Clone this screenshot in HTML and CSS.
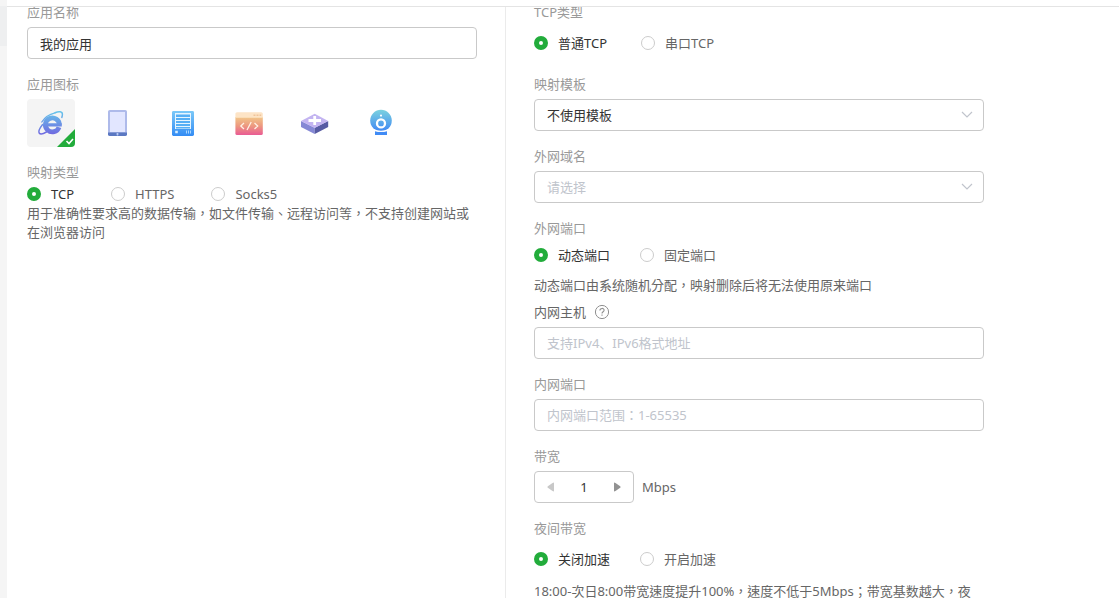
FILE: index.html
```html
<!DOCTYPE html>
<html lang="zh-CN">
<head>
<meta charset="utf-8">
<meta name="viewport" content="width=device-width, initial-scale=1">
<title>我的应用</title>
<link rel="stylesheet" href="styles.css">
</head>
<body>
<div class="shell">
  <aside class="rail"><div class="rail-active"></div></aside>
  <main class="main">
    <header class="topbar"></header>
    <form class="columns">
      <section class="column column-left">
        <div class="field">
          <label class="label" for="app-name">应用名称</label>
          <input class="control" id="app-name" type="text" value="我的应用">
        </div>
        <div class="field">
          <span class="label" id="icon-label">应用图标</span>
          <div class="icons" role="group" aria-labelledby="icon-label">
            <button class="tile tile-selected" type="button" aria-label="浏览器" aria-pressed="true">
              <svg width="32" height="32" viewBox="0 0 32 32" fill="none">
                <defs><linearGradient id="g-ie" x1="0" y1="5" x2="0" y2="28" gradientUnits="userSpaceOnUse"><stop stop-color="#66c3ea"/><stop offset="1" stop-color="#7167e0"/></linearGradient></defs>
                <path d="M24 20.2A7 7 0 1 1 24.4 17.8" stroke="url(#g-ie)" stroke-width="4.8"/>
                <path d="M10.5 16.2H26.8V19.4H10.5Z" fill="url(#g-ie)"/>
                <path d="M20 5.8C24 4 27.4 4.6 27.4 7.2C27.4 8.4 27.2 9.4 26.8 10.4M7.6 17.5C4.4 21.5 3.2 25 4.4 26.4C5.6 27.6 8.4 26.8 11.4 25" stroke="url(#g-ie)" stroke-width="1.5" stroke-linecap="round"/>
                <path d="M6.8 15C9.4 10.6 14.5 7.2 20 5.8" stroke="url(#g-ie)" stroke-width="1.3" stroke-linecap="round"/>
              </svg>
              <svg class="tick" width="18" height="18" viewBox="0 0 18 18" fill="none"><path d="M18 0V18H0Z" fill="#22ac3b"/><path d="M9.5 12L12 14.5L16 10" stroke="#fff" stroke-width="1.6"/></svg>
            </button>
            <button class="tile" type="button" aria-label="手机">
              <svg width="32" height="32" viewBox="0 0 32 32">
                <rect x="7" y="3" width="19" height="26" rx="1.8" fill="#aebaea"/>
                <rect x="9" y="5" width="15" height="20" fill="#e2e6ff"/>
                <path d="M7 25.5H26V27.2Q26 29 24.2 29H8.8Q7 29 7 27.2Z" fill="#5b78c2"/>
                <rect x="15.6" y="26" width="1.8" height="2.4" rx=".6" fill="#b9c9f4"/>
              </svg>
            </button>
            <button class="tile" type="button" aria-label="服务器">
              <svg width="32" height="32" viewBox="0 0 32 32">
                <defs><linearGradient id="g-server" x1="0" y1="0" x2="0" y2="1"><stop stop-color="#7cc9f8"/><stop offset="1" stop-color="#338cf4"/></linearGradient></defs>
                <rect x="5" y="4" width="22" height="25" rx="1.4" fill="url(#g-server)"/>
                <path d="M8 6H24V22H8Z" fill="#e6f5ff"/>
                <path d="M9 7.5H23V10H9ZM9 11H23V13H9ZM9 14H23V16H9ZM9 17H23V19H9ZM9 20H23V21.5H9Z" fill="#56aff5"/>
                <path d="M8.2 23.8H10.8V26.2H8.2Z" fill="#d8eeff"/>
                <path d="M19 23.5H20V26.5H19ZM21 23.5H22V26.5H21ZM23 23.5H24V26.5H23Z" fill="#a9d6ff"/>
              </svg>
            </button>
            <button class="tile" type="button" aria-label="代码">
              <svg width="32" height="32" viewBox="0 0 32 32">
                <defs><linearGradient id="g-code" x1="0" y1="0" x2="0" y2="1"><stop stop-color="#f1c78a"/><stop offset=".5" stop-color="#ed987f"/><stop offset="1" stop-color="#e95b94"/></linearGradient></defs>
                <path d="M2.4 10H29.8V26.4Q29.8 28 28.2 28H4Q2.4 28 2.4 26.4Z" fill="url(#g-code)"/>
                <path d="M2.4 10.8V6.8Q2.4 5.2 4 5.2H28.2Q29.8 5.2 29.8 6.8V10.8Z" fill="#fde4c6"/>
                <path d="M20.5 7.4H22.5V9H20.5ZM23.5 7.4H25.5V9H23.5ZM26.5 7.4H28.2V9H26.5Z" fill="#f0c49a"/>
                <path d="M11 16L7.8 19L11 22M21.5 16L24.7 19L21.5 22M18.2 15L14 23" fill="none" stroke="#fff0e4" stroke-width="1.3"/>
              </svg>
            </button>
            <button class="tile" type="button" aria-label="组件">
              <svg width="32" height="32" viewBox="0 0 32 32">
                <path d="M2 14L15.7 20.8V27L2 20Z" fill="#8588d5"/>
                <path d="M29.2 14L15.7 20.8V27L29.2 20Z" fill="#575ba3"/>
                <path d="M15.7 6.7L29.2 14L15.7 21L2 14Z" fill="#c3b4f1"/>
                <path d="M15.7 9V18M9.5 13.5H22" stroke="#fff" stroke-width="2.8"/>
              </svg>
            </button>
            <button class="tile" type="button" aria-label="摄像头">
              <svg width="32" height="32" viewBox="0 0 32 32">
                <defs><linearGradient id="g-cam" x1="0" y1="0" x2="0" y2="1"><stop stop-color="#7bd2df"/><stop offset="1" stop-color="#4189f4"/></linearGradient></defs>
                <circle cx="16" cy="13.6" r="10.8" fill="url(#g-cam)"/>
                <circle cx="16" cy="8.6" r="1.1" fill="#fff"/>
                <circle cx="16" cy="16.4" r="4" fill="none" stroke="#fff" stroke-width="2.3"/>
                <path d="M8 22.2Q16 26.4 24 22.2" fill="none" stroke="#fff" stroke-width="1.2"/>
                <path d="M10 24.2Q16 26 22 24.2V28H10Z" fill="#408bf5"/>
              </svg>
            </button>
          </div>
        </div>
        <div class="field">
          <span class="label" id="map-label">映射类型</span>
          <div class="radios radios-compact" role="radiogroup" aria-labelledby="map-label">
            <label class="radio"><input type="radio" name="map" checked><span>TCP</span></label>
            <label class="radio"><input type="radio" name="map"><span>HTTPS</span></label>
            <label class="radio"><input type="radio" name="map"><span>Socks5</span></label>
          </div>
          <p class="note centered-marks" lang="zh-Hant">用于准确性要求高的数据传输，如文件传输、远程访问等，不支持创建网站或在浏览器访问</p>
        </div>
      </section>

      <section class="column column-right">
        <div class="field">
          <span class="label" id="tcp-label">TCP类型</span>
          <div class="radios radios-wide" role="radiogroup" aria-labelledby="tcp-label">
            <label class="radio"><input type="radio" name="tcp" checked><span>普通TCP</span></label>
            <label class="radio"><input type="radio" name="tcp"><span>串口TCP</span></label>
          </div>
        </div>
        <div class="field">
          <label class="label" for="template">映射模板</label>
          <div class="select">
            <select class="control" id="template"><option>不使用模板</option></select>
            <svg class="chevron" width="12" height="8" viewBox="0 0 12 8" fill="none"><path d="M1 1L6 6L11 1" stroke="#c0c4cc" stroke-width="1.2"/></svg>
          </div>
        </div>
        <div class="field">
          <label class="label" for="domain">外网域名</label>
          <div class="select">
            <select class="control control-empty" id="domain"><option>请选择</option></select>
            <svg class="chevron" width="12" height="8" viewBox="0 0 12 8" fill="none"><path d="M1 1L6 6L11 1" stroke="#c0c4cc" stroke-width="1.2"/></svg>
          </div>
        </div>
        <div class="field field-tight">
          <span class="label" id="port-label">外网端口</span>
          <div class="radios radios-medium" role="radiogroup" aria-labelledby="port-label">
            <label class="radio"><input type="radio" name="port" checked><span>动态端口</span></label>
            <label class="radio"><input type="radio" name="port"><span>固定端口</span></label>
          </div>
          <p class="note note-spaced centered-marks" lang="zh-Hant">动态端口由系统随机分配，映射删除后将无法使用原来端口</p>
        </div>
        <div class="field">
          <div class="label label-dark">
            <label for="host">内网主机</label>
            <svg width="16" height="16" viewBox="0 0 16 16" fill="none" stroke="#909090"><circle cx="8" cy="8" r="6.6"/><path d="M5.9 6.6C5.9 3.7 10.2 3.8 10.1 6.3C10 7.8 8 7.8 8 9.5M8 10.6V11.8" stroke-width="1.1"/></svg>
          </div>
          <input class="control" id="host" type="text" placeholder="支持IPv4、IPv6格式地址">
        </div>
        <div class="field">
          <label class="label" for="lan-port">内网端口</label>
          <input class="control centered-marks" id="lan-port" lang="zh-Hant" type="text" placeholder="内网端口范围：1-65535">
        </div>
        <div class="field">
          <label class="label" for="bandwidth">带宽</label>
          <div class="bandwidth">
            <div class="stepper">
              <button type="button" aria-label="减少" disabled><svg width="8" height="10" viewBox="0 0 8 10"><path d="M7 .5V9.5L5.5 9L.8 5.8Q0 5 .8 4.2L5.5 1Z" fill="#c8c8c8"/></svg></button>
              <input id="bandwidth" type="text" value="1">
              <button type="button" aria-label="增加"><svg width="8" height="10" viewBox="0 0 8 10"><path d="M1 .5V9.5L2.5 9L7.2 5.8Q8 5 7.2 4.2L2.5 1Z" fill="#929292"/></svg></button>
            </div>
            <span>Mbps</span>
          </div>
        </div>
        <div class="field">
          <span class="label" id="night-label">夜间带宽</span>
          <div class="radios" role="radiogroup" aria-labelledby="night-label">
            <label class="radio"><input type="radio" name="night" checked><span>关闭加速</span></label>
            <label class="radio"><input type="radio" name="night"><span>开启加速</span></label>
          </div>
          <p class="note note-last centered-marks" lang="zh-Hant">18:00-次日8:00带宽速度提升100%，速度不低于5Mbps；带宽基数越大，夜</p>
        </div>
      </section>
    </form>
  </main>
</div>
</body>
</html>
```
FILE: styles.css
```css
* { box-sizing: border-box; }
body {
  margin: 0;
  background: #fff;
  color: #666;
  font: 13px/20px "Noto Sans", "Noto Sans CJK SC", sans-serif;
}
button, input, select { font: inherit; color: inherit; margin: 0; }
.shell { display: flex; height: 100vh; overflow: hidden; }
.rail { flex: none; width: 7px; padding-top: 6px; background: #f5f5f5; }
.rail-active { height: 40px; background: #eeeff0; }
.main { flex: 1; min-width: 0; display: flex; flex-direction: column; }
.topbar { flex: none; height: 7px; border-bottom: 1px solid #e4e4e4; }
.columns {
  flex: 1;
  min-height: 0;
  overflow: hidden;
  display: grid;
  grid-template-columns: minmax(0, 499px) minmax(0, 1fr);
}
.column { margin-top: -5px; }
.column-left { padding: 0 28px 0 20px; border-right: 1px solid #ebebeb; }
.column-right { padding: 0 28px; }
.field { max-width: 450px; margin-bottom: 15px; }
.field-tight { margin-bottom: 7px; }
.label { display: block; margin-bottom: 5px; color: #999; }
.label-dark { display: flex; align-items: center; gap: 8px; color: #666; }

/* Traditional face sets commas and colons in the middle of their cell */
.centered-marks { font-family: "Noto Sans", "Noto Sans CJK TC", sans-serif; }

.control {
  display: block;
  width: 100%;
  height: 32px;
  padding: 0 12px;
  border: 1px solid #c9c9c9;
  border-radius: 4px;
  background: #fff;
  color: #333;
  outline: none;
  appearance: none;
}
.control::placeholder { color: #c0c4cc; opacity: 1; }
.control-empty { color: #c0c4cc; }
.select { position: relative; }
.chevron { position: absolute; right: 11px; top: 12px; pointer-events: none; }

.icons { display: flex; flex-wrap: wrap; gap: 18px; }
.tile {
  position: relative;
  display: grid;
  place-items: center;
  width: 48px;
  height: 48px;
  padding: 0;
  border: 0;
  border-radius: 4px;
  background: none;
  overflow: hidden;
}
.tile-selected { background: #f4f4f4; }
.tick { position: absolute; right: 0; bottom: 0; }

.radios { display: flex; align-items: center; gap: 30px; height: 32px; }
.radios-wide { gap: 34px; }
.radios-medium { height: 24px; }
.radios-compact { gap: 37px; height: 20px; margin-top: -3px; }
.radio { display: flex; align-items: center; gap: 10px; }
.radio input {
  appearance: none;
  width: 14px;
  height: 14px;
  border: 1px solid #ccc;
  border-radius: 50%;
  background: #fff;
}
.radio input:checked { border: 5px solid #22ac3b; }
.radio input:checked + span { color: #333; }
.note { margin: 0; line-height: 19px; }
.note-spaced { margin-top: 8px; line-height: 20px; }
.note-last { margin-top: 6px; line-height: 20px; }

.bandwidth { display: flex; align-items: center; gap: 8px; }
.stepper {
  display: flex;
  width: 100px;
  height: 32px;
  border: 1px solid #c9c9c9;
  border-radius: 4px;
}
.stepper button {
  display: grid;
  place-items: center;
  width: 32px;
  padding: 0;
  border: 0;
  background: none;
}
.stepper input {
  flex: 1;
  min-width: 0;
  padding: 0;
  border: 0;
  background: none;
  color: #333;
  text-align: center;
  outline: none;
}
```
